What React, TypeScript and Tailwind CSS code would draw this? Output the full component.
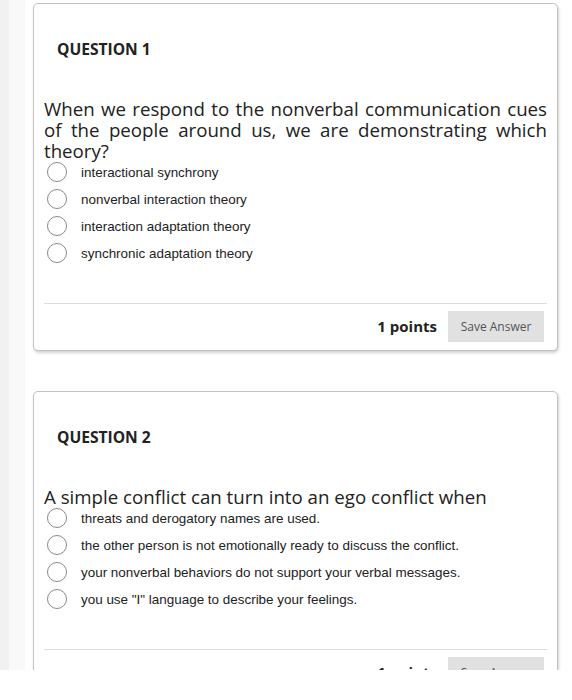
import React from "react";

type Question = {
  label: string;
  text: string;
  options: string[];
  points: number;
};

const questions: Question[] = [
  {
    label: "QUESTION 1",
    text: "When we respond to the nonverbal communication cues of the people around us, we are demonstrating which theory?",
    options: [
      "interactional synchrony",
      "nonverbal interaction theory",
      "interaction adaptation theory",
      "synchronic adaptation theory",
    ],
    points: 1,
  },
  {
    label: "QUESTION 2",
    text: "A simple conflict can turn into an ego conflict when",
    options: [
      "threats and derogatory names are used.",
      "the other person is not emotionally ready to discuss the conflict.",
      'your nonverbal behaviors do not support your verbal messages.',
      'you use "I" language to describe your feelings.',
    ],
    points: 1,
  },
];

const QuestionCard: React.FC<{ q: Question }> = ({ q }) => {
  return (
    <div className="border border-[#c2c2c2] rounded-[5px] bg-white shadow-[1px_2px_3px_rgba(0,0,0,0.18)] pt-[35px] pb-[8px]">
      {/* Heading */}
      <h2 className="pl-[23px] text-[15.6px] leading-[21px] font-bold text-[#222] font-['Open_Sans',sans-serif]">
        {q.label}
      </h2>

      {/* Question body */}
      <div className="mt-[38px] px-[10px]">
        <p className="text-[18.7px] leading-[21px] text-[#222] text-justify font-['Open_Sans',sans-serif]">
          {q.text}
        </p>
        <ul className="mt-[-1px]">
          {q.options.map((opt) => (
            <li key={opt} className="flex items-center h-[27px]">
              <span className="ml-[3px] w-[20px] h-[20px] rounded-full border-[1.5px] border-[#8a8a8a] bg-white shrink-0 -mt-[4px]" />
              <span className="ml-[14px] text-[13.45px] text-[#222] font-['Liberation_Sans',Arial,sans-serif]">
                {opt}
              </span>
            </li>
          ))}
        </ul>
        <div className="mt-[35px] border-t border-[#dcdcdc]" />
      </div>

      {/* Footer */}
      <div className="flex items-center justify-end mt-[7px] pr-[13px]">
        <span className="text-[15px] font-bold text-[#222] font-['Open_Sans',sans-serif]">
          {q.points} points
        </span>
        <button className="ml-[11px] w-[96px] h-[31px] bg-[#e1e1e1] text-[12px] text-[#555] font-['Open_Sans',sans-serif]">
          Save Answer
        </button>
      </div>
    </div>
  );
};

export default function App() {
  return (
    <div className="w-[572px] h-[700px] bg-white">
      <div className="flex h-[670px] overflow-hidden">
        {/* Left page edge */}
        <div className="w-[9px] bg-[#f1f1f1] shrink-0" />
        <div className="w-[16px] bg-[#f9f9f9] shrink-0" />

        <main className="flex-1 pl-[8px] pr-[14px] pt-[3px]">
          <div className="flex flex-col gap-[40px]">
            {questions.map((q) => (
              <QuestionCard key={q.label} q={q} />
            ))}
          </div>
        </main>
      </div>
    </div>
  );
}
